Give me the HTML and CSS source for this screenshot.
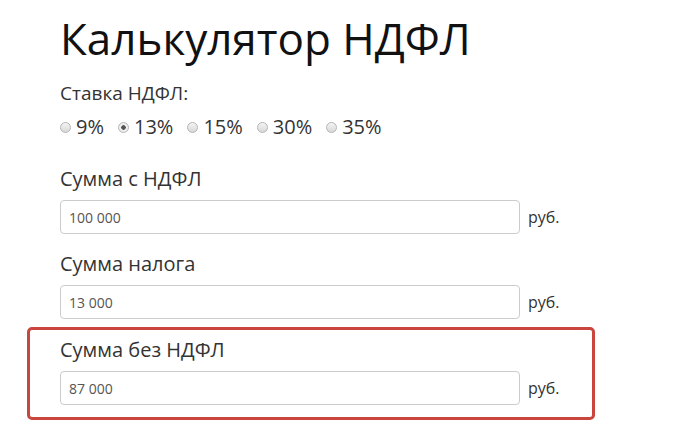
FILE: index.html
```html
<!DOCTYPE html>
<html lang="ru">
<head>
    <meta charset="UTF-8">
    <title>Калькулятор НДФЛ</title>
    <link rel="stylesheet" href="styles.css">
</head>
<body>
    <div class="page">
        <h1>Калькулятор НДФЛ</h1>

        <div class="rate">
            <div class="rate-title">Ставка НДФЛ:</div>
            <div class="rate-list">
                <label class="rate-item"><input type="radio" name="rate" value="9">9%</label>
                <label class="rate-item"><input type="radio" name="rate" value="13" checked>13%</label>
                <label class="rate-item"><input type="radio" name="rate" value="15">15%</label>
                <label class="rate-item"><input type="radio" name="rate" value="30">30%</label>
                <label class="rate-item"><input type="radio" name="rate" value="35">35%</label>
            </div>
        </div>

        <div class="field">
            <label class="field-label" for="gross">Сумма с НДФЛ</label>
            <div class="field-row">
                <input type="text" id="gross" class="field-input" value="100 000">
                <span class="unit">руб.</span>
            </div>
        </div>

        <div class="field">
            <label class="field-label" for="tax">Сумма налога</label>
            <div class="field-row">
                <input type="text" id="tax" class="field-input" value="13 000">
                <span class="unit">руб.</span>
            </div>
        </div>

        <div class="field field-highlight">
            <label class="field-label" for="net">Сумма без НДФЛ</label>
            <div class="field-row">
                <input type="text" id="net" class="field-input" value="87 000">
                <span class="unit">руб.</span>
            </div>
        </div>
    </div>
</body>
</html>
```

FILE: styles.css
```css
body {
    margin: 0;
    font-family: "Open Sans", Arial, sans-serif;
    color: #333;
    background: #fff;
}
.page {
    padding: 0 0 0 60px;
}
h1 {
    margin: 12px 0 0;
    font-size: 44px;
    font-weight: 400;
    line-height: 52px;
    color: #111;
}
.rate {
    margin: 16px 0 26px;
}
.rate-title {
    font-size: 19px;
    line-height: 26px;
}
.rate-list {
    display: flex;
    gap: 14px;
    margin-top: 8px;
}
.rate-item {
    display: flex;
    align-items: center;
    gap: 5px;
    font-size: 20px;
    line-height: 26px;
}
.rate-item input {
    appearance: none;
    width: 11px;
    height: 11px;
    margin: 0;
    border: 1px solid #b5b5b5;
    border-radius: 50%;
    background: linear-gradient(#f4f4f4, #d8d8d8);
}
.rate-item input:checked {
    background: radial-gradient(circle, #555 0 2px, #eee 2.5px);
}
.field {
    margin-top: 17px;
}
.field-label {
    display: block;
    font-size: 20px;
    line-height: 26px;
}
.field-row {
    display: flex;
    align-items: center;
    gap: 8px;
    margin-top: 8px;
}
.field-input {
    box-sizing: border-box;
    width: 460px;
    height: 34px;
    padding: 6px 8px;
    border: 1px solid #ccc;
    border-radius: 4px;
    font-family: inherit;
    font-size: 14px;
    color: #555;
}
.unit {
    font-size: 16px;
    color: #333;
}
.field-highlight {
    width: 532px;
    margin-left: -33px;
    padding: 7px 0 12px 30px;
    border: 3px solid #c9453d;
    border-radius: 5px;
    margin-top: 8px;
}
```
